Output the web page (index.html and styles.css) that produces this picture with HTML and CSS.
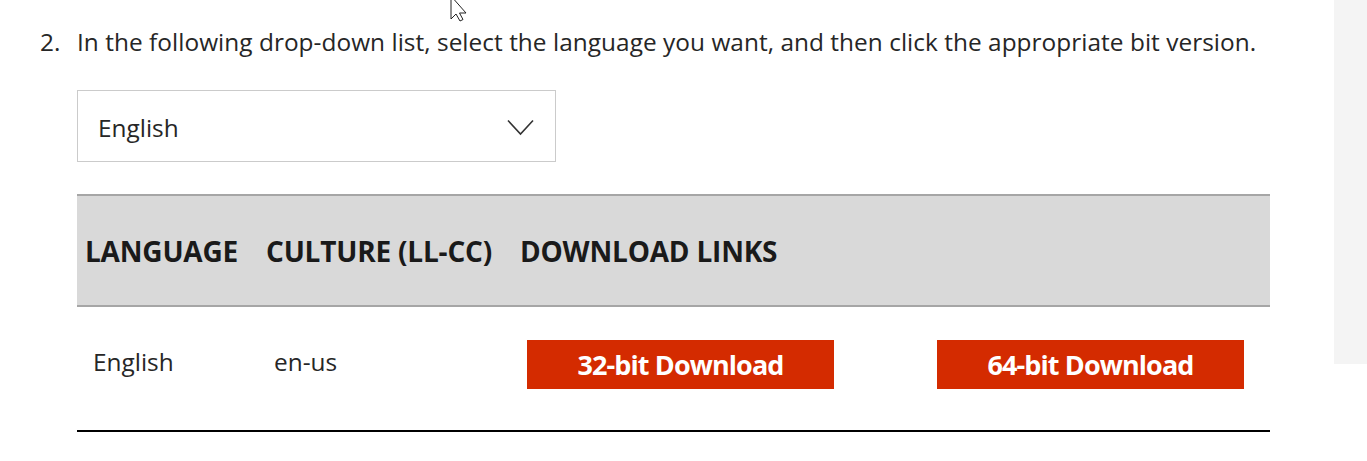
FILE: index.html
```html
<!DOCTYPE html>
<html>
<head>
<meta charset="utf-8">
<link rel="stylesheet" href="styles.css">
</head>
<body>
<div class="page">
  <main class="content">
    <ol class="steps" start="2">
      <li><span class="num">2.</span><span class="step-text">In the following drop-down list, select the language you want, and then click the appropriate bit version.</span></li>
    </ol>
    <div class="select">
      <span class="select-value">English</span>
      <svg class="chevron" width="27" height="17" viewBox="0 0 27 17"><path d="M1 1.5 L13.5 15 L26 1.5" fill="none" stroke="#333" stroke-width="1.6"/></svg>
    </div>
    <div class="table">
      <div class="thead">
        <div class="th">LANGUAGE</div>
        <div class="th">CULTURE (LL-CC)</div>
        <div class="th">DOWNLOAD LINKS</div>
      </div>
      <div class="trow">
        <div class="td">English</div>
        <div class="td">en-us</div>
        <div class="td td-btn"><a class="btn">32-bit Download</a></div>
        <div class="td td-btn"><a class="btn">64-bit Download</a></div>
      </div>
    </div>
  </main>
  <aside class="rail"></aside>
</div>
<svg class="cursor" width="20" height="22" viewBox="0 0 20 22"><path d="M1 -4 L1 19 L6 14 L10 21 L13 19.5 L9.5 13 L16 13 Z" fill="#fff" stroke="#222" stroke-width="1"/></svg>
</body>
</html>
```
FILE: styles.css
```css
html, body {
  margin: 0;
  padding: 0;
  background: #fff;
}
body {
  font-family: "Open Sans", "Noto Sans", sans-serif;
  color: #262626;
  position: relative;
  height: 461px;
  overflow: hidden;
}
.page {
  display: flex;
  height: 461px;
}
.content {
  width: 1334px;
  flex: none;
}
.rail {
  width: 33px;
  height: 364px;
  background: #f4f4f4;
}
.steps {
  list-style: none;
  margin: 0;
  padding: 25px 0 0 40px;
  font-size: 24.4px;
  line-height: 34px;
  letter-spacing: 0.04px;
}
.steps li {
  display: flex;
}
.num {
  width: 37px;
  flex: none;
}
.select {
  margin: 31px 0 0 77px;
  border: 1px solid #cbcbcb;
  display: flex;
  align-items: center;
  justify-content: space-between;
  padding: 0 21px 0 20px;
  box-sizing: border-box;
  width: 479px;
  height: 72px;
}
.select-value {
  font-size: 24.4px;
  color: #262626;
  margin-top: 2px;
}
.chevron {
  margin-top: 3px;
}
.table {
  margin: 32px 0 0 77px;
  width: 1193px;
}
.thead {
  display: grid;
  grid-template-columns: 181px 254px 1fr;
  height: 109px;
  background: #d9d9d9;
  border-top: 2px solid #a6a6a6;
  border-bottom: 2px solid #a6a6a6;
  align-items: center;
}
.th {
  padding-left: 8px;
  font-weight: 700;
  font-size: 28px;
  letter-spacing: -0.2px;
  color: #1a1a1a;
  margin-top: 1px;
}
.trow {
  display: grid;
  grid-template-columns: 181px 254px 410px 1fr;
  height: 123px;
  border-bottom: 2px solid #000;
  align-items: center;
}
.td {
  padding-left: 16px;
  font-size: 24.4px;
  color: #262626;
  margin-top: -14px;
}
.td-btn {
  padding-left: 15px;
  margin-top: -8px;
}
.btn {
  display: flex;
  align-items: center;
  justify-content: center;
  width: 307px;
  height: 49px;
  background: #d42b00;
  color: #fff;
  font-weight: 700;
  font-size: 27px;
  letter-spacing: -0.9px;
  text-decoration: none;
}
.cursor {
  position: absolute;
  left: 450px;
  top: 0;
}
```
